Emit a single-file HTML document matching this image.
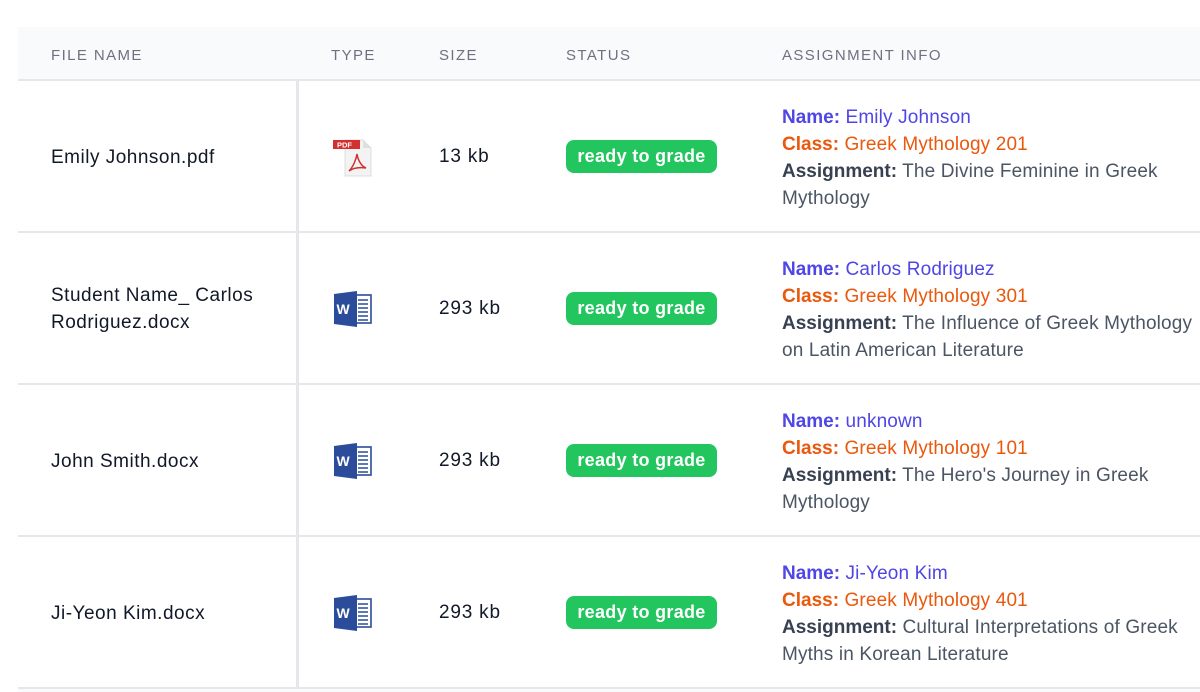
<!DOCTYPE html>
<html><head><meta charset="utf-8"><style>
*{margin:0;padding:0;box-sizing:border-box}
body{width:1200px;height:692px;background:#fff;font-family:"Liberation Sans",Helvetica,Arial,sans-serif;position:relative;overflow:hidden;color:#111827}
.hdr{position:absolute;left:18px;top:27px;width:1182px;height:54px;background:#f9fafb;border-bottom:2px solid #e5e7eb}
.h{position:absolute;top:47px;font-size:15px;letter-spacing:1.4px;color:#6b7280;font-weight:500}
.vline{position:absolute;left:296px;top:81px;width:3px;height:608px;background:#e5e7eb}
.row{position:absolute;left:18px;width:1182px;height:152px;border-bottom:2px solid #e5e7eb}
.fn{position:absolute;left:33px;font-size:19px;line-height:27px;color:#111827;letter-spacing:0.5px}
.sz{position:absolute;left:421px;top:64px;font-size:19px;line-height:24px;letter-spacing:0.8px}
.badge{position:absolute;left:548px;top:59px;width:151px;height:33px;border-radius:8px;background:#22c55e;color:#fff;font-size:18px;font-weight:600;text-align:center;line-height:33px;letter-spacing:0.3px}
.info{position:absolute;left:764px;top:23px;font-size:19px;line-height:27px;width:440px;white-space:nowrap;letter-spacing:0.15px}
.info b{font-weight:700;letter-spacing:0}
.n{color:#4f46e5}.c{color:#ea580c}.a{color:#4b5563}
.a b{color:#374151}
.ic{position:absolute;left:315px;top:58px}
.foot{position:absolute;left:18px;top:689px;width:1182px;height:3px;background:#f9fafb}
</style></head><body>
<div class="hdr"></div>
<div class="h" style="left:51px">FILE NAME</div>
<div class="h" style="left:331px">TYPE</div>
<div class="h" style="left:439px">SIZE</div>
<div class="h" style="left:566px">STATUS</div>
<div class="h" style="left:782px">ASSIGNMENT INFO</div>

<div class="row" style="top:81px">
<div class="fn" style="top:63px">Emily Johnson.pdf</div>
<svg class="ic" style="top:57px" width="40" height="40" viewBox="0 0 40 40"><path d="M12 2h18l8 8v28H12z" fill="#f3f3f3" stroke="#ddd"/><path d="M30 2v8h8" fill="#e0e0e0"/><rect x="0" y="2" width="27" height="9" fill="#d32f2f"/><text x="4" y="9.5" font-size="7.5" font-weight="bold" fill="#fff" font-family="Liberation Sans">PDF</text><path d="M24 16c-1 6-4 13-8 17 4-3 10-4 17-3-5-2-8-8-9-14z" fill="none" stroke="#d32f2f" stroke-width="1.5"/></svg>
<div class="sz">13 kb</div>
<div class="badge">ready to grade</div>
<div class="info"><div class="n"><b>Name:</b> Emily Johnson</div><div class="c"><b>Class:</b> Greek Mythology 201</div><div class="a"><b>Assignment:</b> The Divine Feminine in Greek<br>Mythology</div></div>
</div>

<div class="row" style="top:233px">
<div class="fn" style="top:49px">Student Name_ Carlos<br>Rodriguez.docx</div>
<svg class="ic" width="40" height="36" viewBox="0 0 40 36"><rect x="14" y="4" width="24" height="28" fill="#fff" stroke="#2b4c9b" stroke-width="1.6"/><g stroke="#2b4c9b" stroke-width="1.4"><path d="M25 9h10M25 13h10M25 17h10M25 21h10M25 25h10M25 29h10"/></g><path d="M1 3l23-3v36L1 33z" fill="#2b4c9b"/><text x="3.5" y="23" font-size="14" font-weight="bold" fill="#fff" font-family="Liberation Sans">W</text></svg>
<div class="sz">293 kb</div>
<div class="badge">ready to grade</div>
<div class="info"><div class="n"><b>Name:</b> Carlos Rodriguez</div><div class="c"><b>Class:</b> Greek Mythology 301</div><div class="a"><b>Assignment:</b> The Influence of Greek Mythology<br>on Latin American Literature</div></div>
</div>

<div class="row" style="top:385px">
<div class="fn" style="top:63px">John Smith.docx</div>
<svg class="ic" width="40" height="36" viewBox="0 0 40 36"><rect x="14" y="4" width="24" height="28" fill="#fff" stroke="#2b4c9b" stroke-width="1.6"/><g stroke="#2b4c9b" stroke-width="1.4"><path d="M25 9h10M25 13h10M25 17h10M25 21h10M25 25h10M25 29h10"/></g><path d="M1 3l23-3v36L1 33z" fill="#2b4c9b"/><text x="3.5" y="23" font-size="14" font-weight="bold" fill="#fff" font-family="Liberation Sans">W</text></svg>
<div class="sz">293 kb</div>
<div class="badge">ready to grade</div>
<div class="info"><div class="n"><b>Name:</b> unknown</div><div class="c"><b>Class:</b> Greek Mythology 101</div><div class="a"><b>Assignment:</b> The Hero's Journey in Greek<br>Mythology</div></div>
</div>

<div class="row" style="top:537px">
<div class="fn" style="top:63px">Ji-Yeon Kim.docx</div>
<svg class="ic" width="40" height="36" viewBox="0 0 40 36"><rect x="14" y="4" width="24" height="28" fill="#fff" stroke="#2b4c9b" stroke-width="1.6"/><g stroke="#2b4c9b" stroke-width="1.4"><path d="M25 9h10M25 13h10M25 17h10M25 21h10M25 25h10M25 29h10"/></g><path d="M1 3l23-3v36L1 33z" fill="#2b4c9b"/><text x="3.5" y="23" font-size="14" font-weight="bold" fill="#fff" font-family="Liberation Sans">W</text></svg>
<div class="sz">293 kb</div>
<div class="badge">ready to grade</div>
<div class="info"><div class="n"><b>Name:</b> Ji-Yeon Kim</div><div class="c"><b>Class:</b> Greek Mythology 401</div><div class="a"><b>Assignment:</b> Cultural Interpretations of Greek<br>Myths in Korean Literature</div></div>
</div>
<div class="vline"></div>
<div class="foot"></div>
</body></html>
